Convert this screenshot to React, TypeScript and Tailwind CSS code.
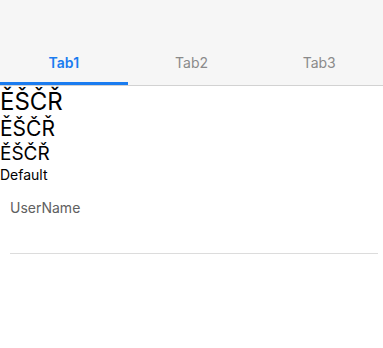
export default function App() {
  return (
    <div className="w-[383px] h-[348px] bg-white flex flex-col" style={{ fontFamily: 'Inter, "Liberation Sans", Arial, sans-serif' }}>
      <div className="bg-[#f6f6f6] pt-[42px] border-b border-[#d2d2d2]">
        <div className="flex">
          <div className="flex-1 flex flex-col">
            <div className="h-[40px] flex items-center justify-center text-[14px] leading-[17px] font-semibold text-[#1a7cf0]">Tab1</div>
            <div className="h-[3px] bg-[#1a7cf0]" />
          </div>
          <div className="flex-1 flex flex-col">
            <div className="h-[40px] flex items-center justify-center text-[14px] leading-[17px] text-[#8a8a8a]">Tab2</div>
            <div className="h-[3px]" />
          </div>
          <div className="flex-1 flex flex-col">
            <div className="h-[40px] flex items-center justify-center text-[14px] leading-[17px] text-[#8a8a8a]">Tab3</div>
            <div className="h-[3px]" />
          </div>
        </div>
      </div>
      <div className="text-black pt-[1px]">
        <div className="text-[24px] leading-[30px]">ĚŠČŘ</div>
        <div className="text-[21px] leading-[24px]">ĚŠČŘ</div>
        <div className="text-[19px] leading-[26px]">ĚŠČŘ</div>
        <div className="text-[14px] leading-[16px]">Default</div>
      </div>
      <div className="pl-[10px] pr-[5px] pt-[16px]">
        <div className="text-[14px] leading-[17px] text-[#606060]">UserName</div>
        <div className="h-[38px] border-b border-[#dcdcdc]" />
      </div>
    </div>
  );
}
